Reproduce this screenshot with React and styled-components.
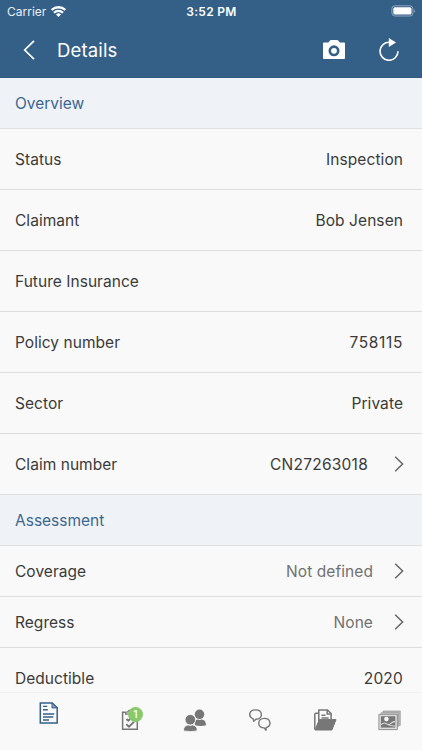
import React from "react";
import styled, { createGlobalStyle } from "styled-components";

const overview = [
  { label: "Status", value: "Inspection" },
  { label: "Claimant", value: "Bob Jensen" },
  { label: "Future Insurance" },
  { label: "Policy number", value: "758115", tracking: 0.65 },
  { label: "Sector", value: "Private" },
  { label: "Claim number", value: "CN27263018", tracking: 0.25, link: true },
];

const assessment = [
  { label: "Coverage", value: "Not defined", link: true, short: true, muted: true },
  { label: "Regress", value: "None", link: true, short: true, muted: true },
  { label: "Deductible", value: "2020", tracking: 0.2 },
];

function WifiIcon() {
  return (
    <svg width="15" height="11" viewBox="0 0 15 11" fill="none" stroke="#fff">
      <path d="M.7 4a9.800 9.800 0 0 1 13.600 0" strokeWidth="2.300" />
      <path d="M3 6.700a6.400 6.400 0 0 1 9 0" strokeWidth="2.100" />
      <path d="M5 8.500a3.600 3.600 0 0 1 5 0L7.500 11z" fill="#fff" stroke="none" />
    </svg>
  );
}

function BatteryIcon() {
  return (
    <svg width="25" height="12" viewBox="0 0 25 12">
      <rect x=".9" y=".8" width="21" height="10.2" rx="3" fill="none" stroke="#8fa8c0" />
      <rect x="2.3" y="2.2" width="18.2" height="7.4" rx="1.7" fill="#fff" />
      <path d="M23.2 4.4c1.4.5 1.4 2.6 0 3.1z" fill="#8fa8c0" />
    </svg>
  );
}

function BackIcon() {
  return (
    <svg width="12" height="20" viewBox="0 0 12 20" fill="none" stroke="#fff" strokeWidth="1.7">
      <path d="M11 .8 1.7 10 11 19.2" />
    </svg>
  );
}

function CameraIcon() {
  return (
    <svg width="22" height="20" viewBox="0 0 22 20" fill="#fff">
      <path
        fillRule="evenodd"
        d="M1 2.500h4.400L7 .6q.5-.6 1.300-.6h5.600q.8 0 1.300.6l1.600 1.900H21q1 0 1 1V18q0 1-1 1H1q-1 0-1-1V3.500q0-1 1-1zM11 5.300a5.500 5.500 0 1 0 0 11 5.500 5.500 0 0 0 0-11z"
      />
      <circle cx="11" cy="10.800" r="2.900" />
    </svg>
  );
}

function RefreshIcon() {
  return (
    <svg width="20" height="23" viewBox="0 0 20 23" fill="none">
      <path d="M10.600 4.300a9 9 0 1 0 8.400 9" stroke="#fff" strokeWidth="1.600" />
      <path d="M9.800 0 17 4.500 9.800 9z" fill="#fff" />
    </svg>
  );
}

function ChevronIcon() {
  return (
    <svg width="10" height="16" viewBox="0 0 10 16" fill="none" stroke="#666" strokeWidth="1.500">
      <path d="M1.200.8 8.600 8l-7.400 7.200" />
    </svg>
  );
}

function DocumentIcon() {
  return (
    <svg width="20" height="22" viewBox="0 0 20 22" fill="none" stroke="#355f88" strokeWidth="1.500">
      <path d="M1.300.9h11.900l5 4.800v15.400H1.300z" />
      <path d="M13 .9v5h5.200z" fill="#8ba3ba" strokeWidth="1" />
      <path d="M4 4.400h4.200M4 7.700h4.800M4 12h11.300M4 15h10.300M4 18h6" strokeWidth="1.400" />
    </svg>
  );
}

function TaskIcon() {
  return (
    <svg width="18" height="22" viewBox="0 0 18 22" fill="none" stroke="#777">
      <path d="M4.200 3.200H1.600v17h14.700v-17h-2.600" strokeWidth="1.500" />
      <path d="M4.700 5.200V3.300L7 2.800C7 .8 10.500.8 10.700 2.800l2.300.5v1.900z" strokeWidth="1.300" />
      <path d="m5.500 10 1.800 1.700 4-3.700M5.300 15.300l2.700 2.400 5-4.800" strokeWidth="2" />
    </svg>
  );
}

function PeopleIcon() {
  return (
    <svg width="24" height="23" viewBox="0 0 24 23" fill="#777">
      <circle cx="16.500" cy="5.300" r="4.800" />
      <path d="M12 16.300v-4.200q1-1.400 2.800-1.700l1.700.6 2-.6c3 .3 4.500 2 4.500 5.900q-5 1.500-11 0z" />
      <g stroke="#f9f9f9" strokeWidth=".9">
        <circle cx="7.300" cy="10.700" r="5.300" />
        <path d="M.4 21.900c0-3.800 1.600-5.600 4.900-6l2 .6 2.100-.6c3.200.4 4.900 2.200 4.900 6q-6.900 1.500-13.900 0z" />
      </g>
    </svg>
  );
}

function ChatIcon() {
  return (
    <svg width="22" height="22" viewBox="0 0 22 22" fill="none" stroke="#777" strokeWidth="1.400" strokeLinejoin="round">
      <path d="M4.700 12.300 4.200 9.800C-1.300 7.600.1.900 6.300.9c7.900 0 8.200 9 .6 9.400z" />
      <path d="m17 21.200.1-2.600c6-1.900 4.600-9.200-1.700-9.200-7.300 0-7.700 8.900-.2 9.500z" />
    </svg>
  );
}

function FolderIcon() {
  return (
    <svg width="24" height="22" viewBox="0 0 24 22" fill="none" stroke="#777" strokeWidth="1.500">
      <path d="M1.800 20.600V5.200q0-1 1-1h2.700M5.800 13V1h8.700l3.600 3.500v6" />
      <path d="M14.200 1v4h4M8.500 6.300h4M8.500 9h7.200" />
      <path d="M6.300 10.600H23L18.900 21H2z" fill="#777" strokeWidth="1" strokeLinejoin="round" />
    </svg>
  );
}

function GalleryIcon() {
  return (
    <svg width="23" height="21" viewBox="0 0 23 21">
      <path d="M5 1h17.300v14.500H5z" fill="#b7b7b7" stroke="#999" strokeWidth=".7" />
      <path d="M3 2.700h17.300v14H3z" fill="#ccc" stroke="#999" strokeWidth=".7" />
      <path d="M.9 4.300h18.400v15.300H.9z" fill="#ddd" stroke="#888" strokeWidth=".9" />
      <path d="M2.900 6.200h14.400v11.400H2.900z" fill="#777" />
      <circle cx="8.400" cy="9.100" r="2.300" fill="#f9f9f9" />
      <path d="M2.900 14.700c3-2.800 4.500-1.800 6.700-.3s3.300-3.200 7.700-2.700M9.600 14.400q3 2 7.700 1.600" fill="none" stroke="#ddd" strokeWidth="1.100" />
    </svg>
  );
}

function InfoRow({ label, value, tracking, link, short, muted }) {
  return (
    <Row $short={short}>
      <Label>{label}</Label>
      {value && (
        <Value $muted={muted} $tracking={tracking}>
          {value}
        </Value>
      )}
      {link && (
        <Arrow $wide={!short}>
          <ChevronIcon />
        </Arrow>
      )}
    </Row>
  );
}

function App() {
  return (
    <Screen>
      <GlobalStyle />
      <Header>
        <StatusBar>
          <Carrier>
            Carrier <WifiIcon />
          </Carrier>
          <Clock>3:52 PM</Clock>
          <Battery>
            <BatteryIcon />
          </Battery>
        </StatusBar>
        <NavBar>
          <BackIcon />
          <Title>Details</Title>
          <Actions>
            <CameraIcon />
            <RefreshIcon />
          </Actions>
        </NavBar>
      </Header>
      <Content>
        <SectionTitle>Overview</SectionTitle>
        {overview.map((item) => (
          <InfoRow key={item.label} {...item} />
        ))}
        <SectionTitle>Assessment</SectionTitle>
        {assessment.map((item) => (
          <InfoRow key={item.label} {...item} />
        ))}
      </Content>
      <TabBar>
        <Tab $active>
          <DocumentIcon />
        </Tab>
        <Tab>
          <TaskIcon />
          <Badge>1</Badge>
        </Tab>
        <Tab>
          <PeopleIcon />
        </Tab>
        <Tab>
          <ChatIcon />
        </Tab>
        <Tab>
          <FolderIcon />
        </Tab>
        <Tab>
          <GalleryIcon />
        </Tab>
      </TabBar>
    </Screen>
  );
}

const GlobalStyle = createGlobalStyle`
  * {
    box-sizing: border-box;
  }
  body {
    margin: 0;
    font-family: Inter, "Liberation Sans", sans-serif;
  }
  svg {
    display: block;
    flex: none;
  }
`;

const Screen = styled.div`
  display: flex;
  flex-direction: column;
  height: 750px;
  overflow: hidden;
  background: #f9f9f9;
  color: #3b3b3b;
`;

const Header = styled.header`
  flex: none;
  height: 78px;
  background: #345f87;
  border-bottom: 1px solid #2f5981;
  color: #fff;
`;

const StatusBar = styled.div`
  display: grid;
  grid-template-columns: 1fr auto 1fr;
  align-items: center;
  height: 22px;
  padding: 0 6px 0 7px;
  font-size: 12px;
`;

const Carrier = styled.div`
  display: flex;
  align-items: center;
  gap: 5px;
  color: #e9eff5;
`;

const Clock = styled.div`
  font-weight: 600;
  letter-spacing: 0.3px;
`;

const Battery = styled.div`
  justify-self: end;
`;

const NavBar = styled.div`
  display: flex;
  align-items: center;
  height: 55px;
  padding: 0 23px;
`;

const Title = styled.h1`
  margin: 0 0 0 22px;
  font-size: 18.5px;
  font-weight: 400;
  letter-spacing: 0.15px;
`;

const Actions = styled.div`
  display: flex;
  align-items: center;
  gap: 34px;
  margin-left: auto;
`;

const Content = styled.main`
  flex: 1;
  min-height: 0;
  overflow: hidden;
  font-size: 15.5px;
`;

const SectionTitle = styled.h2`
  display: flex;
  align-items: center;
  height: 51px;
  margin: 0;
  padding: 0 15px;
  background: #eff3f8;
  border-bottom: 1px solid #dedfe1;
  color: #3d668e;
  font-size: 15.5px;
  font-weight: 400;
`;

const Row = styled.div`
  display: flex;
  align-items: center;
  height: ${(props) => (props.$short ? "51px" : "61px")};
  padding: 0 19px 0 15px;
  border-bottom: 1px solid #dedede;
`;

const Label = styled.span`
  letter-spacing: 0.04px;
`;

const Value = styled.span`
  margin-left: auto;
  color: ${(props) => (props.$muted ? "#717171" : "inherit")};
  letter-spacing: ${(props) => props.$tracking ?? 0.08}px;
`;

const Arrow = styled.span`
  margin-left: ${(props) => (props.$wide ? "26px" : "21px")};
  margin-right: -1px;
`;

const TabBar = styled.nav`
  display: grid;
  grid-template-columns: 97px repeat(5, 65px);
  flex: none;
  height: 58px;
  border-top: 1px solid #f0f0f0;
  background: #f9f9f9;
`;

const Tab = styled.div`
  position: relative;
  display: flex;
  justify-content: center;
  align-items: center;
  padding-bottom: ${(props) => (props.$active ? "17px" : "3px")};
`;

const Badge = styled.span`
  position: absolute;
  top: 14px;
  left: 31px;
  width: 15px;
  height: 15px;
  border-radius: 50%;
  background: #87c96b;
  color: #fff;
  font-size: 10.5px;
  font-weight: 500;
  line-height: 15px;
  text-align: center;
`;

export default App;
